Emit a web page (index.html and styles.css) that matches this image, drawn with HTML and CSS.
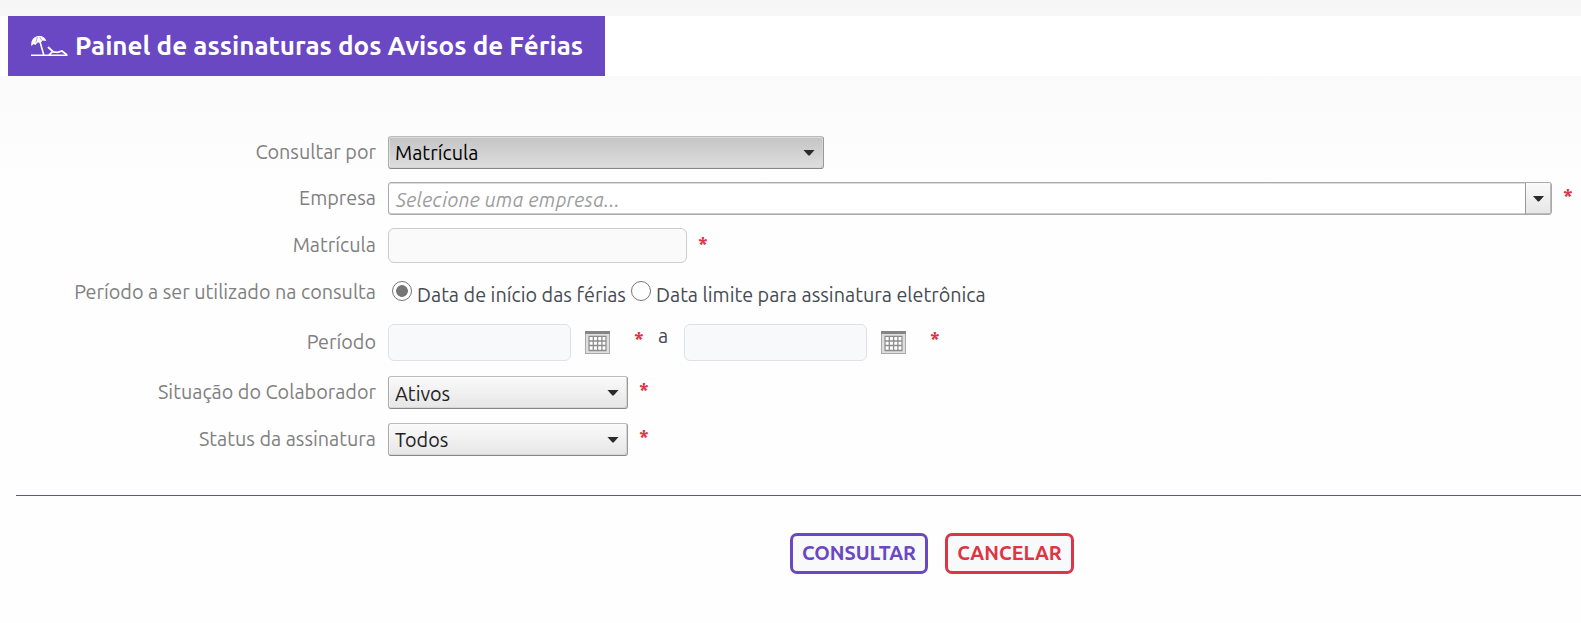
FILE: index.html
```
<!DOCTYPE html>
<html lang="pt-BR">
<head>
    <meta charset="UTF-8">
    <meta name="viewport" content="width=device-width, initial-scale=1.0">
    <title>Painel de assinaturas dos Avisos de Férias</title>
    <link rel="stylesheet" href="styles.css">
</head>
<body>
    <header class="page-header">
        <h1 class="page-title">
            <svg class="beach-icon" width="37" height="22" viewBox="0 0 37 22" fill="none" stroke="#fff">
                <path d="M0.300 11C-0.300 5 3 1.300 7.500 1C11.500 0.600 14.500 2.800 15.300 6L11.800 5.600L9.500 7.800L6.500 7.500L4.500 10L2.700 9Z" fill="#fff" stroke="none"/>
                <path d="M6.500 2L4.800 7.500M8.800 2L10.800 5.500" stroke="#6a47c3" stroke-width="0.500"/>
                <path d="M8.500 5L12.800 20" stroke-width="1.600"/>
                <path d="M0 20.300H36.500" stroke-width="1.500"/>
                <path d="M17 12L22.300 17L26.500 17.300L31 16L36 20M22 16L18 20.200" stroke-width="1.800"/>
            </svg>
            <span>Painel de assinaturas dos Avisos de Férias</span>
        </h1>
    </header>

    <form class="search-form">
        <div class="row">
            <label class="label">Consultar por</label>
            <div class="select select-wide active">
                <span>Matrícula</span>
                <i class="arrow"></i>
            </div>
        </div>

        <div class="row">
            <label class="label">Empresa</label>
            <div class="combo">
                <span class="placeholder">Selecione uma empresa...</span>
                <div class="combo-button"><i class="arrow"></i></div>
            </div>
            <span class="required">*</span>
        </div>

        <div class="row row-matricula">
            <label class="label" for="matricula">Matrícula</label>
            <input type="text" class="input input-matricula" id="matricula">
            <span class="required">*</span>
        </div>

        <div class="row row-radio">
            <label class="label">Período a ser utilizado na consulta</label>
            <input type="radio" class="radio" name="tipo" id="inicio" checked>
            <label class="option option-start" for="inicio">Data de início das férias</label>
            <input type="radio" class="radio" name="tipo" id="limite">
            <label class="option" for="limite">Data limite para assinatura eletrônica</label>
        </div>

        <div class="row row-period">
            <label class="label">Período</label>
            <input type="text" class="input input-date">
            <svg class="calendar" width="25" height="23" viewBox="0 0 25 23">
                <rect x="0.500" y="0.500" width="24" height="22" fill="#dedede" stroke="#a8a8a8"/>
                <rect x="0" y="0" width="25" height="3" fill="#858585"/>
                <rect x="3.500" y="5" width="18" height="15" fill="#fff"/>
                <path d="M4 5V20M8.300 5V20M12.600 5V20M16.900 5V20M21 5V20M3.500 5.300H21.500M3.500 10H21.500M3.500 14.500H21.500M3.500 19.500H21.500" stroke="#8c8c8c" stroke-width="1.300"/>
            </svg>
            <span class="required">*</span>
            <span class="until">a</span>
            <input type="text" class="input input-date">
            <svg class="calendar" width="25" height="23" viewBox="0 0 25 23">
                <rect x="0.500" y="0.500" width="24" height="22" fill="#dedede" stroke="#a8a8a8"/>
                <rect x="0" y="0" width="25" height="3" fill="#858585"/>
                <rect x="3.500" y="5" width="18" height="15" fill="#fff"/>
                <path d="M4 5V20M8.300 5V20M12.600 5V20M16.900 5V20M21 5V20M3.500 5.300H21.500M3.500 10H21.500M3.500 14.500H21.500M3.500 19.500H21.500" stroke="#8c8c8c" stroke-width="1.300"/>
            </svg>
            <span class="required">*</span>
        </div>

        <div class="row row-situation">
            <label class="label">Situação do Colaborador</label>
            <div class="select">
                <span>Ativos</span>
                <i class="arrow"></i>
            </div>
            <span class="required">*</span>
        </div>

        <div class="row row-status">
            <label class="label">Status da assinatura</label>
            <div class="select">
                <span>Todos</span>
                <i class="arrow"></i>
            </div>
            <span class="required">*</span>
        </div>

        <hr>

        <div class="buttons">
            <button type="button" class="btn btn-search">CONSULTAR</button>
            <button type="button" class="btn btn-cancel">CANCELAR</button>
        </div>
    </form>
</body>
</html>
```

FILE: styles.css
```
* {
    box-sizing: border-box;
}
body {
    margin: 0;
    padding-top: 16px;
    min-height: 623px;
    overflow: hidden;
    background: linear-gradient(#f6f6f6, #f7f7f7 16px, #fafafa 76px, #fdfdfd 150px, #fefefe 200px);
    font-family: Ubuntu, "Noto Sans", sans-serif;
    font-size: 19.8px;
    line-height: 26px;
    color: #454b52;
}
.page-header {
    display: flex;
    height: 60px;
    padding-left: 8px;
    background: #fff;
}
.page-title {
    display: flex;
    align-items: center;
    width: 597px;
    margin: 0;
    padding-left: 23px;
    background: #6a47c3;
    color: #fff;
    font-size: 26px;
    font-weight: 700;
    white-space: nowrap;
}
.beach-icon {
    margin-right: 7px;
}
.search-form {
    padding-top: 60px;
}
.row {
    display: flex;
    align-items: center;
    height: 33px;
    margin-bottom: 13px;
    white-space: nowrap;
}
.row-matricula {
    height: 35px;
    margin-bottom: 14px;
}
.row-radio {
    margin-bottom: 14px;
}
.row-period {
    height: 37px;
    margin-bottom: 15px;
}
.row-situation {
    margin-bottom: 14px;
}
.row-status {
    margin-bottom: 0;
}
.label {
    width: 376px;
    margin-right: 12px;
    padding-bottom: 1px;
    text-align: right;
    color: #808080;
}
.row-radio .label {
    padding-bottom: 4px;
}
.select {
    display: flex;
    align-items: center;
    justify-content: space-between;
    width: 240px;
    height: 33px;
    padding: 0 8px 0 6px;
    border: 1px solid;
    border-color: #bbb #999 #888 #aaa;
    border-radius: 3px;
    background: linear-gradient(#fafafa, #e6e6e6);
    box-shadow: inset 0 0 0 1px rgba(255, 255, 255, 0.4), inset -1px -1px 0 #bbb;
    color: #222;
}
.row-situation .select span {
    padding-top: 2px;
}
.select-wide {
    width: 436px;
}
.active {
    background: linear-gradient(#c4c4c4, #dedede);
    color: #000;
}
.arrow {
    width: 12px;
    height: 6px;
    background: #2b2b2b;
    clip-path: polygon(0 0, 100% 0, 55% 100%, 45% 100%);
}
.combo {
    display: flex;
    justify-content: space-between;
    width: 1164px;
    height: 33px;
    border: 1px solid #aaa;
    border-radius: 3px;
    background: #fff;
    box-shadow: inset 0 1px 0 #ddd, inset 0 -1px 0 #ccc;
}
.placeholder {
    padding: 4px 0 0 7px;
    color: #9c9c9c;
    font-style: italic;
    letter-spacing: 0.3px;
}
.combo-button {
    display: flex;
    align-items: center;
    justify-content: center;
    width: 26px;
    border-left: 1px solid #999;
    background: linear-gradient(#fafafa, #e6e6e6);
    box-shadow: inset -1px -1px 0 #bbb;
}
.required {
    margin: -5px 0 0 11px;
    color: #dc3545;
    font-weight: 700;
}
.row-matricula .required {
    margin-top: -3px;
}
.input {
    width: 183px;
    height: 37px;
    padding: 0 8px;
    border: 1px solid #dee2e6;
    border-radius: 6px;
    background: #f8f9fa;
}
.input-matricula {
    width: 299px;
    height: 35px;
    border-color: #ccc;
    background: #fafafa;
}
.radio {
    appearance: none;
    width: 20px;
    height: 20px;
    margin: -5px 5px 0 4px;
    border: 1.5px solid #767676;
    border-radius: 50%;
    background: #fff;
}
.radio:checked {
    background: radial-gradient(circle, #767676 5.5px, #fff 6.2px);
}
.option {
    padding-top: 3px;
}
.option-start {
    width: 210px;
}
.calendar {
    margin-left: 14px;
}
.row-period .required {
    width: 10px;
    margin: -7px 0 0 24px;
}
.until {
    width: 26px;
    margin: -13px 0 0 14px;
}
hr {
    height: 1px;
    margin: 39px 0 37px 16px;
    border: none;
    background: #6a47c3;
}
.buttons {
    display: flex;
    gap: 17px;
    padding-left: 790px;
}
.btn {
    width: 138px;
    height: 41px;
    padding: 0 0 2px;
    border: 3px solid #6a47c3;
    border-radius: 7px;
    background: #f8f9fa;
    color: #6a47c3;
    font-family: inherit;
    font-size: 19.8px;
    font-weight: 600;
}
.btn-cancel {
    width: 129px;
    border-color: #dc3545;
    color: #dc3545;
}
```
